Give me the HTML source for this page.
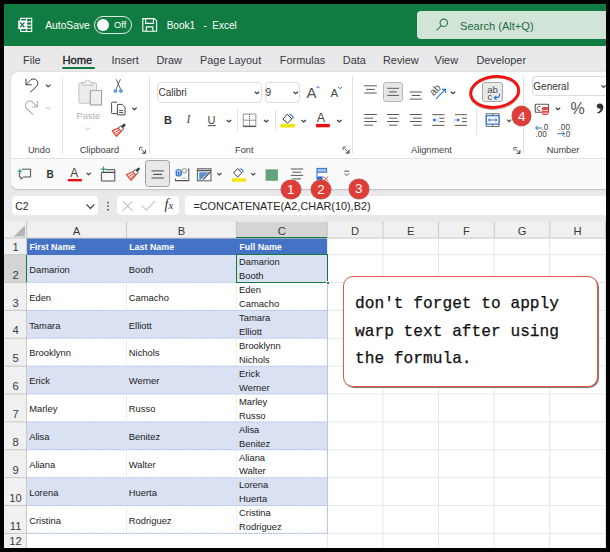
<!DOCTYPE html>
<html><head><meta charset="utf-8">
<style>
*{box-sizing:border-box}
html,body{margin:0;padding:0}
body{width:610px;height:552px;position:relative;overflow:hidden;background:#e9e9ec;font-family:"Liberation Sans",sans-serif;color:#262626}
.a{position:absolute}
.t{position:absolute;white-space:nowrap;line-height:1}
svg{position:absolute;overflow:visible}
</style></head><body>

<div class="a" style="left:0.00px;top:0.00px;width:610.00px;height:45.60px;background:#117c42"></div>
<svg style="left:0px;top:0px" width="610" height="552" viewBox="0 0 610 552"><g fill="none" stroke="#fff" stroke-width="1.1">
<rect x="20.6" y="18.3" width="11.1" height="13.2" fill="#117c42"/>
<line x1="26.6" y1="18.3" x2="26.6" y2="31.5"/>
<line x1="20.6" y1="21.8" x2="31.7" y2="21.8"/>
<line x1="20.6" y1="25.2" x2="31.7" y2="25.2"/>
<line x1="20.6" y1="28.3" x2="31.7" y2="28.3"/>
</g>
<rect x="18.2" y="20.5" width="8.4" height="8.6" fill="#fff"/>
<path d="M20.2 22.4 L24.4 27.4 M24.4 22.4 L20.2 27.4" stroke="#117c42" stroke-width="1.4"/>
</svg>
<div class="t" style="left:45.20px;top:21.08px;font-size:10.3px;color:#fff;font-family:'Liberation Sans',sans-serif;">AutoSave</div>
<div class="a" style="left:94.4px;top:16.4px;width:37.6px;height:17.4px;border:1px solid rgba(255,255,255,.85);border-radius:9px"></div>
<div class="a" style="left:97.2px;top:18.9px;width:12px;height:12px;border-radius:50%;background:#fff"></div>
<div class="t" style="left:114.10px;top:20.93px;font-size:9.3px;color:#fff;font-family:'Liberation Sans',sans-serif;">Off</div>
<svg style="left:0px;top:0px" width="610" height="552" viewBox="0 0 610 552"><g fill="none" stroke="#fff" stroke-width="1.1">
<path d="M142.8 18.6 H154.3 L156.6 20.9 V31.2 H142.8 Z"/>
<path d="M145.6 18.6 V23.4 H153.4 V18.6"/>
<path d="M146.3 31.2 V26.9 H152.9 V31.2"/>
</g></svg>
<div class="t" style="left:166.70px;top:21.14px;font-size:10.0px;color:#fff;font-family:'Liberation Sans',sans-serif;">Book1 &nbsp;&nbsp;-&nbsp;&nbsp;Excel</div>
<div class="a" style="left:417.20px;top:10.90px;width:220.00px;height:28.00px;background:#d2e3d8;border-radius:4px"></div>
<svg style="left:0px;top:0px" width="610" height="552" viewBox="0 0 610 552"><g fill="none" stroke="#2c7a4a" stroke-width="1.1"><circle cx="443.8" cy="22.8" r="3.7"/><path d="M441.2 25.6 L436.6 30.4"/></g></svg>
<div class="t" style="left:460.00px;top:20.90px;font-size:11.1px;color:#236b40;font-family:'Liberation Sans',sans-serif;">Search (Alt+Q)</div>
<div class="t" style="left:23.10px;top:54.77px;font-size:10.9px;color:#383838;font-family:'Liberation Sans',sans-serif;">File</div>
<div class="t" style="left:62.50px;top:54.52px;font-size:11.2px;color:#242424;font-family:'Liberation Sans',sans-serif;-webkit-text-stroke:0.35px #242424;">Home</div>
<div class="t" style="left:111.50px;top:54.77px;font-size:10.9px;color:#383838;font-family:'Liberation Sans',sans-serif;">Insert</div>
<div class="t" style="left:156.40px;top:54.77px;font-size:10.9px;color:#383838;font-family:'Liberation Sans',sans-serif;">Draw</div>
<div class="t" style="left:200.00px;top:54.77px;font-size:10.9px;color:#383838;font-family:'Liberation Sans',sans-serif;">Page Layout</div>
<div class="t" style="left:279.80px;top:54.77px;font-size:10.9px;color:#383838;font-family:'Liberation Sans',sans-serif;">Formulas</div>
<div class="t" style="left:342.80px;top:54.77px;font-size:10.9px;color:#383838;font-family:'Liberation Sans',sans-serif;">Data</div>
<div class="t" style="left:383.00px;top:54.77px;font-size:10.9px;color:#383838;font-family:'Liberation Sans',sans-serif;">Review</div>
<div class="t" style="left:434.60px;top:54.77px;font-size:10.9px;color:#383838;font-family:'Liberation Sans',sans-serif;">View</div>
<div class="t" style="left:476.40px;top:54.77px;font-size:10.9px;color:#383838;font-family:'Liberation Sans',sans-serif;">Developer</div>
<div class="a" style="left:62.30px;top:67.00px;width:32.60px;height:2.00px;background:#117c42;border-radius:1px"></div>
<div class="a" style="left:11.00px;top:71.50px;width:620.00px;height:117.00px;background:#fff;border-radius:7px;box-shadow:0 0.5px 1.5px rgba(0,0,0,.18)"></div>
<div class="a" style="left:11.00px;top:158.00px;width:620.00px;height:30.50px;background:#fafafa;border-top:1px solid #e1e1e1;border-radius:0 0 8px 8px"></div>
<svg style="left:0px;top:0px" width="610" height="552" viewBox="0 0 610 552"><line x1="62.5" y1="76.5" x2="62.5" y2="153.5" stroke="#e0e0e0" stroke-width="1"/><line x1="149.5" y1="76.5" x2="149.5" y2="153.5" stroke="#e0e0e0" stroke-width="1"/><line x1="352.5" y1="76.5" x2="352.5" y2="153.5" stroke="#e0e0e0" stroke-width="1"/><line x1="523.5" y1="76.5" x2="523.5" y2="153.5" stroke="#e0e0e0" stroke-width="1"/></svg>
<svg style="left:0px;top:0px" width="610" height="552" viewBox="0 0 610 552"><g fill="none" stroke="#3c3c3c" stroke-width="1.0" stroke-linecap="round" stroke-linejoin="round">
<path d="M25.9 79.2 V84.8 H31.4"/>
<path d="M26.4 84.3 L30.5 80.2 A4.3 4.3 0 0 1 36.6 86.3 L30.4 92.1"/>
</g><path d="M45.90 84.60 L48.20 86.60 L50.50 84.60" fill="none" stroke="#3c3c3c" stroke-width="1.2"/>
<g fill="none" stroke="#a7b3ad" stroke-width="1.1" stroke-linecap="round" stroke-linejoin="round">
<path d="M37.4 101.3 V107 H32.2"/>
<path d="M36.9 106.5 L32.8 102.4 A4.3 4.3 0 0 0 26.7 108.5 L32.9 114.7"/>
</g><path d="M46.00 107.40 L48.20 109.20 L50.40 107.40" fill="none" stroke="#c0c0c0" stroke-width="1.0"/></svg>
<div class="t" style="left:27.90px;top:146.13px;font-size:9.3px;color:#424242;font-family:'Liberation Sans',sans-serif;">Undo</div>
<svg style="left:0px;top:0px" width="610" height="552" viewBox="0 0 610 552"><g>
<rect x="78.9" y="83.0" width="17.6" height="20.2" rx="1" fill="#ededed" stroke="#c4c4c4" stroke-width="1"/>
<path d="M82.4 85.0 V82.4 H85.4 A2.3 2.3 0 0 1 90.0 82.4 H93.0 V85.0 Z" fill="#f6f6f6" stroke="#bdbdbd" stroke-width="1"/>
<rect x="90.2" y="90.4" width="11.4" height="14.6" fill="#efefef" stroke="#8e8e8e" stroke-width="0.9"/>
<line x1="90.2" y1="90.6" x2="101.6" y2="90.6" stroke="#9fc2ae" stroke-width="0.9"/>
</g><path d="M85.50 127.70 L87.70 129.70 L89.90 127.70" fill="none" stroke="#bdbdbd" stroke-width="1.0"/>
<g fill="none" stroke="#505050" stroke-width="0.9">
<path d="M116.2 79.3 L120.6 89.4 M120.4 79.3 L116.0 89.4"/>
</g>
<circle cx="115.5" cy="90.9" r="1.5" fill="#7ba7e0" stroke="#3f7fd6" stroke-width="0.8"/>
<circle cx="120.9" cy="90.9" r="1.5" fill="#7ba7e0" stroke="#3f7fd6" stroke-width="0.8"/>
<g fill="none" stroke="#4a4a4a" stroke-width="1">
<path d="M117 102.2 H112.4 Q111.6 102.2 111.6 103 V112.8 Q111.6 113.6 112.4 113.6 H116.8"/>
<path d="M117.4 104.4 H122.2 L125 107.2 V114.9 H117.4 Z" fill="#fff"/>
<path d="M119.2 110.6 H123.2 M119.2 112.6 H123.2"/>
</g><path d="M132.30 107.80 L134.50 109.80 L136.70 107.80" fill="none" stroke="#3c3c3c" stroke-width="1.2"/>
<g transform="translate(-14.4 -43.8)">
<path d="M138.6 168.8 L136.0 171.4" stroke="#3c3c3c" stroke-width="2.6" stroke-linecap="round"/>
<path d="M132.6 172.0 L135.2 169.6 L138.0 172.6 L135.6 175.2 Z" fill="#fff" stroke="#3c3c3c" stroke-width="1.0"/>
<path d="M132.6 172.0 L126.6 174.6 L131.0 180.2 L135.6 175.2 Z" fill="#fff" stroke="#e8483a" stroke-width="1.3" stroke-linejoin="round"/>
<path d="M128.4 176.6 L133.4 174.0 M129.8 178.6 L134.2 175.4" stroke="#e8483a" stroke-width="1.0"/>
</g>
<g fill="none" stroke="#555" stroke-width="0.9"><path d="M139.5 150.3 V147.3 H142.5"/><path d="M145.5 149.8 V153.3 H142.0"/><path d="M141.0 148.8 L145.3 153.10000000000002"/><path d="M142.6 153.10000000000002 H145.3 V150.4"/></g></svg>
<div class="t" style="left:76.60px;top:111.51px;font-size:9.2px;color:#b0b0b0;font-family:'Liberation Sans',sans-serif;">Paste</div>
<div class="t" style="left:79.70px;top:146.21px;font-size:9.2px;color:#424242;font-family:'Liberation Sans',sans-serif;">Clipboard</div>
<div class="a" style="left:156.70px;top:82.30px;width:104.90px;height:20.50px;background:#fff;border:1px solid #dcdcdc;border-radius:4px"></div>
<div class="a" style="left:264.60px;top:82.30px;width:35.60px;height:20.50px;background:#fff;border:1px solid #dcdcdc;border-radius:4px"></div>
<div class="t" style="left:158.50px;top:88.44px;font-size:10.0px;color:#333;font-family:'Liberation Sans',sans-serif;">Calibri</div>
<div class="t" style="left:265.50px;top:88.44px;font-size:10.0px;color:#333;font-family:'Liberation Sans',sans-serif;">9</div>
<div class="t" style="left:306.60px;top:84.90px;font-size:15.0px;color:#505050;font-family:'Liberation Sans',sans-serif;">A</div>
<div class="t" style="left:330.50px;top:87.67px;font-size:11.5px;color:#444;font-family:'Liberation Sans',sans-serif;">A</div>
<div class="t" style="left:163.90px;top:114.69px;font-size:11.0px;color:#333;font-family:'Liberation Sans',sans-serif;font-weight:bold;">B</div>
<div class="t" style="left:186.40px;top:114.27px;font-size:11.5px;color:#444;font-family:'Liberation Sans',sans-serif;font-style:italic;font-family:'Liberation Serif',serif;">I</div>
<div class="t" style="left:207.50px;top:114.69px;font-size:11.0px;color:#444;font-family:'Liberation Sans',sans-serif;">U</div>
<div class="t" style="left:316.80px;top:112.42px;font-size:12.5px;color:#444;font-family:'Liberation Sans',sans-serif;">A</div>
<svg style="left:0px;top:0px" width="610" height="552" viewBox="0 0 610 552"><path d="M254.80 91.70 L257.00 93.70 L259.20 91.70" fill="none" stroke="#3c3c3c" stroke-width="1.2"/><path d="M293.60 91.70 L295.80 93.70 L298.00 91.70" fill="none" stroke="#3c3c3c" stroke-width="1.2"/>
<path d="M316.4 88.2 L318 86.5 L319.6 88.2" fill="none" stroke="#2f6fd0" stroke-width="1"/>
<path d="M338.2 86.9 L340.2 88.6 L342.2 86.9" fill="none" stroke="#2f6fd0" stroke-width="1"/>
<line x1="207.8" y1="125.6" x2="215.8" y2="125.6" stroke="#444" stroke-width="1"/>
<path d="M226.80 120.00 L229.00 122.00 L231.20 120.00" fill="none" stroke="#3c3c3c" stroke-width="1.2"/>
<line x1="237.6" y1="110" x2="237.6" y2="130.6" stroke="#e0e0e0" stroke-width="1"/>
<g fill="none" stroke="#555" stroke-width="1">
<rect x="243.3" y="114" width="12.6" height="12.4" stroke-dasharray="1.2 0.8"/>
<path d="M249.6 114 V126.4 M243.3 120.2 H255.9" stroke-dasharray="1.2 0.8"/>
<path d="M243.3 126.4 H255.9" stroke-width="1.4" stroke-dasharray="none"/>
</g><path d="M264.00 120.00 L266.20 122.00 L268.40 120.00" fill="none" stroke="#3c3c3c" stroke-width="1.2"/>
<line x1="275.5" y1="110" x2="275.5" y2="130.6" stroke="#e0e0e0" stroke-width="1"/>
<g>
<path d="M283 119.2 L287.2 114.2 L291.8 118.8 L287.6 123.2 Z" fill="#fff" stroke="#3c3c3c" stroke-width="1"/>
<path d="M289.2 114.6 Q292.6 114.2 293.2 118.6" fill="none" stroke="#2f6fd0" stroke-width="1.1"/>
<rect x="280.6" y="123.9" width="14.3" height="3.6" fill="#f5e400"/>
</g><path d="M301.50 120.00 L303.70 122.00 L305.90 120.00" fill="none" stroke="#3c3c3c" stroke-width="1.2"/>
<rect x="316" y="123.9" width="13.8" height="3.4" fill="#e81010"/>
<path d="M337.10 120.00 L339.30 122.00 L341.50 120.00" fill="none" stroke="#3c3c3c" stroke-width="1.2"/>
<g fill="none" stroke="#555" stroke-width="0.9"><path d="M343.1 150.1 V147.1 H346.1"/><path d="M349.1 149.6 V153.1 H345.6"/><path d="M344.6 148.6 L348.90000000000003 152.9"/><path d="M346.20000000000005 152.9 H348.90000000000003 V150.2"/></g></svg>
<div class="t" style="left:235.10px;top:146.21px;font-size:9.2px;color:#424242;font-family:'Liberation Sans',sans-serif;">Font</div>
<div class="a" style="left:382.60px;top:82.10px;width:20.50px;height:20.40px;background:#e6e6e6;border:1px solid #b8b8b8;border-radius:3px"></div>
<div class="a" style="left:482.30px;top:82.30px;width:21.20px;height:20.20px;background:#e9e9e9;border:1px solid #a8a8a8;border-radius:3px"></div>
<svg style="left:0px;top:0px" width="610" height="552" viewBox="0 0 610 552"><line x1="364.2" y1="85.8" x2="376.9" y2="85.8" stroke="#5a5a5a" stroke-width="1.0"/><line x1="364.2" y1="93.0" x2="376.9" y2="93.0" stroke="#5a5a5a" stroke-width="1.0"/><line x1="366.0" y1="89.4" x2="374.7" y2="89.4" stroke="#5a5a5a" stroke-width="1.0"/>
<line x1="387.2" y1="88.3" x2="399" y2="88.3" stroke="#5a5a5a" stroke-width="1.0"/><line x1="387.2" y1="95.4" x2="399" y2="95.4" stroke="#5a5a5a" stroke-width="1.0"/><line x1="389.2" y1="91.9" x2="396.8" y2="91.9" stroke="#5a5a5a" stroke-width="1.0"/>
<line x1="409.7" y1="92.0" x2="422" y2="92.0" stroke="#5a5a5a" stroke-width="1.0"/><line x1="409.7" y1="99.1" x2="422" y2="99.1" stroke="#5a5a5a" stroke-width="1.0"/><line x1="411.8" y1="95.5" x2="420.2" y2="95.5" stroke="#5a5a5a" stroke-width="1.0"/>
<line x1="364.3" y1="114.5" x2="376.8" y2="114.5" stroke="#5a5a5a" stroke-width="1.0"/><line x1="364.3" y1="121.5" x2="376.8" y2="121.5" stroke="#5a5a5a" stroke-width="1.0"/><line x1="364.3" y1="118.2" x2="373" y2="118.2" stroke="#5a5a5a" stroke-width="1.0"/><line x1="364.3" y1="125.2" x2="373" y2="125.2" stroke="#5a5a5a" stroke-width="1.0"/>
<line x1="387" y1="114.5" x2="399" y2="114.5" stroke="#5a5a5a" stroke-width="1.0"/><line x1="387" y1="121.5" x2="399" y2="121.5" stroke="#5a5a5a" stroke-width="1.0"/><line x1="389" y1="118.2" x2="397.3" y2="118.2" stroke="#5a5a5a" stroke-width="1.0"/><line x1="389" y1="125.2" x2="397.3" y2="125.2" stroke="#5a5a5a" stroke-width="1.0"/>
<line x1="409.8" y1="114.5" x2="421.7" y2="114.5" stroke="#5a5a5a" stroke-width="1.0"/><line x1="409.8" y1="121.5" x2="421.7" y2="121.5" stroke="#5a5a5a" stroke-width="1.0"/><line x1="413" y1="118.2" x2="421.7" y2="118.2" stroke="#5a5a5a" stroke-width="1.0"/><line x1="413" y1="125.2" x2="421.7" y2="125.2" stroke="#5a5a5a" stroke-width="1.0"/>
<line x1="432.1" y1="114.7" x2="444.4" y2="114.7" stroke="#5a5a5a" stroke-width="1.0"/><line x1="432.1" y1="125.4" x2="444.4" y2="125.4" stroke="#5a5a5a" stroke-width="1.0"/><line x1="439.2" y1="118.2" x2="444.4" y2="118.2" stroke="#5a5a5a" stroke-width="1.0"/><line x1="439.2" y1="121.6" x2="444.4" y2="121.6" stroke="#5a5a5a" stroke-width="1.0"/>
<path d="M432.3 120 L435.2 118 V122 Z" fill="#2f6fd0"/><line x1="435" y1="120" x2="438" y2="120" stroke="#2f6fd0" stroke-width="1.1" stroke-dasharray="1 0.6"/>
<line x1="455" y1="114.7" x2="467" y2="114.7" stroke="#5a5a5a" stroke-width="1.0"/><line x1="455" y1="125.4" x2="467" y2="125.4" stroke="#5a5a5a" stroke-width="1.0"/><line x1="461.8" y1="118.2" x2="467" y2="118.2" stroke="#5a5a5a" stroke-width="1.0"/><line x1="461.8" y1="121.6" x2="467" y2="121.6" stroke="#5a5a5a" stroke-width="1.0"/>
<path d="M460.2 120 L457.3 118 V122 Z" fill="#2f6fd0"/><line x1="454.3" y1="120" x2="457.5" y2="120" stroke="#2f6fd0" stroke-width="1.1" stroke-dasharray="1 0.6"/>
<text x="0" y="0" font-family="Liberation Sans" font-size="10.2" fill="#4a4a4a" transform="translate(433.6 96.2) rotate(-45)">ab</text>
<path d="M436 98.8 L445.6 89.2 M441.9 89.4 H445.6 V93.1" fill="none" stroke="#2f6fd0" stroke-width="1.1"/>
<path d="M450.80 91.70 L453.00 93.70 L455.20 91.70" fill="none" stroke="#3c3c3c" stroke-width="1.2"/>
<text x="487.2" y="93.2" font-family="Liberation Sans" font-size="9.6" fill="#4a4a4a">ab</text>
<text x="487.4" y="99.6" font-family="Liberation Sans" font-size="9.6" fill="#4a4a4a">c</text>
<path d="M499.6 93.6 Q500.4 97.8 494.6 97.8 M496.4 95.8 L494.3 97.8 L496.4 99.8" fill="none" stroke="#2f6fd0" stroke-width="1.1"/>
<g>
<rect x="486.3" y="113.8" width="12.7" height="12.6" fill="none" stroke="#6a6a6a" stroke-width="1"/>
<line x1="492.65" y1="113.8" x2="492.65" y2="126.4" stroke="#6a6a6a" stroke-width="1"/>
<rect x="486.3" y="115.8" width="12.7" height="8.3" fill="#fff" stroke="#2f6fd0" stroke-width="1.2"/>
<path d="M488.4 120 H496.9 M490 118.4 L488.4 120 L490 121.6 M495.3 118.4 L496.9 120 L495.3 121.6" fill="none" stroke="#2f6fd0" stroke-width="1"/>
</g><path d="M507.10 119.60 L509.10 121.60 L511.10 119.60" fill="none" stroke="#3c3c3c" stroke-width="1.1"/>
<line x1="476.7" y1="108" x2="476.7" y2="134.7" stroke="#e0e0e0" stroke-width="1"/>
<g fill="none" stroke="#555" stroke-width="0.9"><path d="M513.9 150.5 V147.5 H516.9"/><path d="M519.9 150.0 V153.5 H516.4"/><path d="M515.4 149.0 L519.6999999999999 153.3"/><path d="M517.0 153.3 H519.6999999999999 V150.6"/></g></svg>
<div class="t" style="left:411.00px;top:146.21px;font-size:9.2px;color:#424242;font-family:'Liberation Sans',sans-serif;">Alignment</div>
<div class="a" style="left:531.70px;top:75.60px;width:100.00px;height:20.00px;background:#fff;border:1px solid #dcdcdc;border-radius:4px"></div>
<div class="t" style="left:533.30px;top:81.73px;font-size:10.0px;color:#333;font-family:'Liberation Sans',sans-serif;">General</div>
<div class="t" style="left:570.40px;top:101.06px;font-size:16.0px;color:#505050;font-family:'Liberation Sans',sans-serif;">%</div>
<svg style="left:0px;top:0px" width="610" height="552" viewBox="0 0 610 552"><path d="M599.6 103.4 C602.4 103.4 603.4 105.2 603.4 107.2 C603.4 110.2 601.2 112.6 597.6 113.6 L597.2 112.6 C599.4 111.6 600.4 110.4 600.6 108.8 C598.4 109 596.8 107.8 596.8 106 C596.8 104.4 598 103.4 599.6 103.4 Z" fill="#333"/></svg>
<svg style="left:0px;top:0px" width="610" height="552" viewBox="0 0 610 552"><rect x="535.2" y="104.3" width="13.3" height="8.0" rx="0.6" fill="#fff" stroke="#555" stroke-width="1.1"/>
<path d="M540.2 106.6 A2.1 2.1 0 1 0 540.2 110.4" fill="none" stroke="#444" stroke-width="1"/>
<rect x="541.8" y="107.0" width="6.8" height="8.1" rx="1.8" fill="#e84545"/>
<path d="M542.4 110.5 H548 M542.4 113.2 H548" stroke="#fff" stroke-width="0.8"/>
<path d="M555.80 107.80 L558.00 109.80 L560.20 107.80" fill="none" stroke="#3c3c3c" stroke-width="1.2"/><path d="M601.40 85.40 L603.60 87.40 L605.80 85.40" fill="none" stroke="#3c3c3c" stroke-width="1.2"/>
<path d="M541.8 128 H535.6 M537.8 126 L535.6 128 L537.8 130" fill="none" stroke="#2f6fd0" stroke-width="1"/>
<path d="M557.4 133.7 H564.6 M562.4 131.7 L564.6 133.7 L562.4 135.7" fill="none" stroke="#2f6fd0" stroke-width="1"/>
</svg>
<div class="t" style="left:541.60px;top:124.26px;font-size:8.2px;color:#444;font-family:'Liberation Sans',sans-serif;">.0</div>
<div class="t" style="left:535.40px;top:131.26px;font-size:8.2px;color:#444;font-family:'Liberation Sans',sans-serif;">.00</div>
<div class="t" style="left:558.60px;top:124.26px;font-size:8.2px;color:#444;font-family:'Liberation Sans',sans-serif;">.00</div>
<div class="t" style="left:563.40px;top:131.26px;font-size:8.2px;color:#444;font-family:'Liberation Sans',sans-serif;">.0</div>
<div class="t" style="left:546.70px;top:146.21px;font-size:9.2px;color:#424242;font-family:'Liberation Sans',sans-serif;">Number</div>
<div class="a" style="left:145.20px;top:160.10px;width:24.60px;height:26.80px;background:#e8e8e8;border:1px solid #a0a0a0;border-radius:3.5px"></div>
<div class="t" style="left:46.60px;top:169.84px;font-size:10.0px;color:#333;font-family:'Liberation Sans',sans-serif;font-weight:bold;">B</div>
<div class="t" style="left:70.20px;top:167.04px;font-size:12.0px;color:#444;font-family:'Liberation Sans',sans-serif;">A</div>
<svg style="left:0px;top:0px" width="610" height="552" viewBox="0 0 610 552"><g fill="none" stroke="#4a4a4a" stroke-width="1">
<path d="M22 169.2 H30.6 V177 H23.2 L21 179.4 V177 H19.4 V172.2"/>
</g>
<path d="M19.9 168.8 V173.4 M17.6 171.1 H22.2" stroke="#3aa36a" stroke-width="1.2"/>
<rect x="67.8" y="179" width="14.1" height="2.4" fill="#e81010"/>
<path d="M86.60 172.85 L88.70 174.75 L90.80 172.85" fill="none" stroke="#3c3c3c" stroke-width="1.1"/>
<g fill="none" stroke="#4a4a4a" stroke-width="1">
<path d="M105.6 169.7 H114.8 V181 H101.4 V173"/>
<line x1="101.4" y1="172.4" x2="114.8" y2="172.4" stroke-width="1.3"/>
</g>
<path d="M103.4 166.6 V171.8 M100.8 169.2 H106" stroke="#3aa36a" stroke-width="1.2"/>
<g transform="translate(0 0)">
<path d="M138.6 168.8 L136.0 171.4" stroke="#3c3c3c" stroke-width="2.6" stroke-linecap="round"/>
<path d="M132.6 172.0 L135.2 169.6 L138.0 172.6 L135.6 175.2 Z" fill="#fff" stroke="#3c3c3c" stroke-width="1.0"/>
<path d="M132.6 172.0 L126.6 174.6 L131.0 180.2 L135.6 175.2 Z" fill="#fff" stroke="#e8483a" stroke-width="1.3" stroke-linejoin="round"/>
<path d="M128.4 176.6 L133.4 174.0 M129.8 178.6 L134.2 175.4" stroke="#e8483a" stroke-width="1.0"/>
</g>
<line x1="151.5" y1="170.9" x2="163.9" y2="170.9" stroke="#555" stroke-width="1.1"/><line x1="151.5" y1="178.0" x2="163.9" y2="178.0" stroke="#555" stroke-width="1.1"/><line x1="153.3" y1="174.4" x2="162.1" y2="174.4" stroke="#444" stroke-width="1.1"/>
<g>
<path d="M188.8 168.2 V180.6 H175.5 V178.6" fill="none" stroke="#555" stroke-width="1.1"/>
<rect x="175.6" y="169.2" width="6.2" height="7.4" rx="2" fill="#2f6fd0"/>
<path d="M177.6 171 V175.6 M179.8 171 V175.6 M176.4 170.8 H181" stroke="#fff" stroke-width="0.7"/>
<circle cx="184.4" cy="170.8" r="2.3" fill="#eee" stroke="#888" stroke-width="0.9"/>
<path d="M180.8 178 H186.6" stroke="#9fc2ae" stroke-width="0.8"/>
</g>
<g>
<rect x="197.4" y="168.8" width="13.6" height="12" fill="#fff" stroke="#555" stroke-width="1"/>
<line x1="197.4" y1="170.6" x2="211" y2="170.6" stroke="#555" stroke-width="1.4"/>
<path d="M199.2 172.2 H209 L200.4 180 H199.2 Z" fill="#5b8fd8"/>
<path d="M203 179.6 L210.4 172" stroke="#555" stroke-width="1.3"/>
</g><path d="M217.30 173.05 L219.40 174.95 L221.50 173.05" fill="none" stroke="#3c3c3c" stroke-width="1.1"/>
<g>
<path d="M233.6 173 L237.6 168.6 L241.8 172.8 L237.8 177 Z" fill="#fff" stroke="#3c3c3c" stroke-width="1"/>
<path d="M239.6 169 Q242.8 168.6 243.4 172.4" fill="none" stroke="#2f6fd0" stroke-width="1.1"/>
<rect x="231.9" y="178.4" width="14" height="3.2" fill="#f5e400"/>
</g><path d="M251.10 173.05 L253.20 174.95 L255.30 173.05" fill="none" stroke="#3c3c3c" stroke-width="1.1"/>
<rect x="265.6" y="169.3" width="12.3" height="11.5" fill="#62a57a"/>
<line x1="290.8" y1="169.0" x2="303.2" y2="169.0" stroke="#555" stroke-width="1.0"/><line x1="290.8" y1="175.4" x2="303.2" y2="175.4" stroke="#555" stroke-width="1.0"/><line x1="292.4" y1="172.2" x2="301.0" y2="172.2" stroke="#555" stroke-width="1.0"/><line x1="292.4" y1="178.9" x2="301.0" y2="178.9" stroke="#555" stroke-width="1.0"/>
<g>
<rect x="317" y="168.4" width="9.6" height="3.8" fill="#a9c4ec" stroke="#2f6fd0" stroke-width="1"/>
<line x1="317" y1="172.2" x2="317" y2="176.6" stroke="#2f6fd0" stroke-width="1"/>
<rect x="316.5" y="176.4" width="6.2" height="3.4" fill="#2f6fd0"/>
<path d="M323.2 176.4 L328.4 181 M328.4 176.4 L323.2 181" stroke="#e84a3a" stroke-width="0.9"/>
</g>
<path d="M344.4 171.2 H349.2 M344.6 173.4 L346.8 175.6 L349 173.4" fill="none" stroke="#555" stroke-width="1"/>
</svg>
<div class="a" style="left:11.90px;top:196.20px;width:86.20px;height:18.90px;background:#fff;border-radius:4px"></div>
<div class="a" style="left:117.30px;top:196.20px;width:61.90px;height:18.90px;background:#fff;border-radius:4px"></div>
<div class="a" style="left:185.00px;top:196.20px;width:430.00px;height:18.90px;background:#fff;border-radius:4px"></div>
<div class="t" style="left:15.20px;top:201.70px;font-size:10.4px;color:#262626;font-family:'Liberation Sans',sans-serif;">C2</div>
<svg style="left:0px;top:0px" width="610" height="552" viewBox="0 0 610 552"><path d="M86.40 204.30 L90.40 208.50 L94.40 204.30" fill="none" stroke="#3c3c3c" stroke-width="1.2"/>
<circle cx="108" cy="202.6" r="0.9" fill="#444"/><circle cx="108" cy="206.1" r="0.9" fill="#444"/><circle cx="108" cy="209.7" r="0.9" fill="#444"/>
<path d="M122.6 201.2 L132.6 210.8 M132.6 201.2 L122.6 210.8" stroke="#c2c2c2" stroke-width="1.1"/>
<path d="M141.8 205.8 L146.4 210.2 L154.8 201.2" fill="none" stroke="#c2c2c2" stroke-width="1.1"/>
</svg>
<div class="t" style="left:164.60px;top:197.95px;font-size:14.0px;color:#333;font-family:'Liberation Sans',sans-serif;font-family:'Liberation Serif',serif;font-style:italic;">f<span style="font-size:11px">x</span></div>
<div class="t" style="left:193.40px;top:200.87px;font-size:10.9px;color:#262626;font-family:'Liberation Sans',sans-serif;">=CONCATENATE(A2,CHAR(10),B2)</div>
<div class="a" style="left:0.00px;top:221.50px;width:610.00px;height:340.00px;background:#fff"></div>
<div class="a" style="left:0.00px;top:221.50px;width:610.00px;height:16.60px;background:#f0f0f0"></div>
<div class="a" style="left:0.00px;top:221.50px;width:26.60px;height:340.00px;background:#f0f0f0"></div>
<div class="a" style="left:236.30px;top:221.50px;width:91.10px;height:16.60px;background:#d4d4d4"></div>
<div class="a" style="left:0.00px;top:254.60px;width:26.60px;height:27.88px;background:#d4d4d4"></div>
<svg style="left:0px;top:0px" width="610" height="552" viewBox="0 0 610 552"><line x1="327.4" y1="238.1" x2="327.4" y2="560" stroke="#e6e6e6" stroke-width="1"/><line x1="382.9" y1="238.1" x2="382.9" y2="560" stroke="#e6e6e6" stroke-width="1"/><line x1="438.5" y1="238.1" x2="438.5" y2="560" stroke="#e6e6e6" stroke-width="1"/><line x1="494.2" y1="238.1" x2="494.2" y2="560" stroke="#e6e6e6" stroke-width="1"/><line x1="549.8" y1="238.1" x2="549.8" y2="560" stroke="#e6e6e6" stroke-width="1"/><line x1="605.5" y1="238.1" x2="605.5" y2="560" stroke="#e6e6e6" stroke-width="1"/><line x1="327.4" y1="254.6" x2="610" y2="254.6" stroke="#e6e6e6" stroke-width="1"/><line x1="327.4" y1="282.48" x2="610" y2="282.48" stroke="#e6e6e6" stroke-width="1"/><line x1="327.4" y1="310.36" x2="610" y2="310.36" stroke="#e6e6e6" stroke-width="1"/><line x1="327.4" y1="338.24" x2="610" y2="338.24" stroke="#e6e6e6" stroke-width="1"/><line x1="327.4" y1="366.12" x2="610" y2="366.12" stroke="#e6e6e6" stroke-width="1"/><line x1="327.4" y1="394.0" x2="610" y2="394.0" stroke="#e6e6e6" stroke-width="1"/><line x1="327.4" y1="421.88" x2="610" y2="421.88" stroke="#e6e6e6" stroke-width="1"/><line x1="327.4" y1="449.76" x2="610" y2="449.76" stroke="#e6e6e6" stroke-width="1"/><line x1="327.4" y1="477.64" x2="610" y2="477.64" stroke="#e6e6e6" stroke-width="1"/><line x1="327.4" y1="505.52" x2="610" y2="505.52" stroke="#e6e6e6" stroke-width="1"/><line x1="327.4" y1="533.4" x2="610" y2="533.4" stroke="#e6e6e6" stroke-width="1"/></svg>
<div class="a" style="left:26.60px;top:238.10px;width:300.80px;height:16.50px;background:#4472c4"></div>
<div class="a" style="left:26.60px;top:254.60px;width:300.80px;height:27.88px;background:#d9e1f2"></div>
<div class="a" style="left:26.60px;top:282.48px;width:300.80px;height:27.88px;background:#fff"></div>
<div class="a" style="left:26.60px;top:310.36px;width:300.80px;height:27.88px;background:#d9e1f2"></div>
<div class="a" style="left:26.60px;top:338.24px;width:300.80px;height:27.88px;background:#fff"></div>
<div class="a" style="left:26.60px;top:366.12px;width:300.80px;height:27.88px;background:#d9e1f2"></div>
<div class="a" style="left:26.60px;top:394.00px;width:300.80px;height:27.88px;background:#fff"></div>
<div class="a" style="left:26.60px;top:421.88px;width:300.80px;height:27.88px;background:#d9e1f2"></div>
<div class="a" style="left:26.60px;top:449.76px;width:300.80px;height:27.88px;background:#fff"></div>
<div class="a" style="left:26.60px;top:477.64px;width:300.80px;height:27.88px;background:#d9e1f2"></div>
<div class="a" style="left:26.60px;top:505.52px;width:300.80px;height:27.88px;background:#fff"></div>
<svg style="left:0px;top:0px" width="610" height="552" viewBox="0 0 610 552"><line x1="126.5" y1="282.48" x2="126.5" y2="310.36" stroke="#dfe3ea" stroke-width="1" stroke-dasharray="1.5 1"/><line x1="126.5" y1="338.24" x2="126.5" y2="366.12" stroke="#dfe3ea" stroke-width="1" stroke-dasharray="1.5 1"/><line x1="126.5" y1="394.0" x2="126.5" y2="421.88" stroke="#dfe3ea" stroke-width="1" stroke-dasharray="1.5 1"/><line x1="126.5" y1="449.76" x2="126.5" y2="477.64" stroke="#dfe3ea" stroke-width="1" stroke-dasharray="1.5 1"/><line x1="126.5" y1="505.52" x2="126.5" y2="533.4" stroke="#dfe3ea" stroke-width="1" stroke-dasharray="1.5 1"/><line x1="236.3" y1="282.48" x2="236.3" y2="310.36" stroke="#dfe3ea" stroke-width="1" stroke-dasharray="1.5 1"/><line x1="236.3" y1="338.24" x2="236.3" y2="366.12" stroke="#dfe3ea" stroke-width="1" stroke-dasharray="1.5 1"/><line x1="236.3" y1="394.0" x2="236.3" y2="421.88" stroke="#dfe3ea" stroke-width="1" stroke-dasharray="1.5 1"/><line x1="236.3" y1="449.76" x2="236.3" y2="477.64" stroke="#dfe3ea" stroke-width="1" stroke-dasharray="1.5 1"/><line x1="236.3" y1="505.52" x2="236.3" y2="533.4" stroke="#dfe3ea" stroke-width="1" stroke-dasharray="1.5 1"/><line x1="26.6" y1="282.48" x2="327.4" y2="282.48" stroke="#b4c6e7" stroke-width="1" stroke-dasharray="2 0.8"/><line x1="26.6" y1="310.36" x2="327.4" y2="310.36" stroke="#b4c6e7" stroke-width="1" stroke-dasharray="2 0.8"/><line x1="26.6" y1="338.24" x2="327.4" y2="338.24" stroke="#b4c6e7" stroke-width="1" stroke-dasharray="2 0.8"/><line x1="26.6" y1="366.12" x2="327.4" y2="366.12" stroke="#b4c6e7" stroke-width="1" stroke-dasharray="2 0.8"/><line x1="26.6" y1="394.0" x2="327.4" y2="394.0" stroke="#b4c6e7" stroke-width="1" stroke-dasharray="2 0.8"/><line x1="26.6" y1="421.88" x2="327.4" y2="421.88" stroke="#b4c6e7" stroke-width="1" stroke-dasharray="2 0.8"/><line x1="26.6" y1="449.76" x2="327.4" y2="449.76" stroke="#b4c6e7" stroke-width="1" stroke-dasharray="2 0.8"/><line x1="26.6" y1="477.64" x2="327.4" y2="477.64" stroke="#b4c6e7" stroke-width="1" stroke-dasharray="2 0.8"/><line x1="26.6" y1="505.52" x2="327.4" y2="505.52" stroke="#b4c6e7" stroke-width="1" stroke-dasharray="2 0.8"/><line x1="26.6" y1="533.4" x2="327.4" y2="533.4" stroke="#b4c6e7" stroke-width="1" stroke-dasharray="2 0.8"/><line x1="26.6" y1="533.4" x2="327.4" y2="533.4" stroke="#b4c6e7" stroke-width="1" stroke-dasharray="2 0.8"/><line x1="327.4" y1="254.6" x2="327.4" y2="533.4" stroke="#b4c6e7" stroke-width="1"/><line x1="26.6" y1="221.5" x2="26.6" y2="238.1" stroke="#c8c8c8" stroke-width="1"/><line x1="126.5" y1="221.5" x2="126.5" y2="238.1" stroke="#c8c8c8" stroke-width="1"/><line x1="236.3" y1="221.5" x2="236.3" y2="238.1" stroke="#c8c8c8" stroke-width="1"/><line x1="327.4" y1="221.5" x2="327.4" y2="238.1" stroke="#c8c8c8" stroke-width="1"/><line x1="382.9" y1="221.5" x2="382.9" y2="238.1" stroke="#c8c8c8" stroke-width="1"/><line x1="438.5" y1="221.5" x2="438.5" y2="238.1" stroke="#c8c8c8" stroke-width="1"/><line x1="494.2" y1="221.5" x2="494.2" y2="238.1" stroke="#c8c8c8" stroke-width="1"/><line x1="549.8" y1="221.5" x2="549.8" y2="238.1" stroke="#c8c8c8" stroke-width="1"/><line x1="605.5" y1="221.5" x2="605.5" y2="238.1" stroke="#c8c8c8" stroke-width="1"/><line x1="0" y1="238.1" x2="610" y2="238.1" stroke="#c8c8c8" stroke-width="1"/><line x1="26.6" y1="221.5" x2="26.6" y2="560" stroke="#c8c8c8" stroke-width="1"/><line x1="0" y1="254.6" x2="26.6" y2="254.6" stroke="#c8c8c8" stroke-width="1"/><line x1="0" y1="282.48" x2="26.6" y2="282.48" stroke="#c8c8c8" stroke-width="1"/><line x1="0" y1="310.36" x2="26.6" y2="310.36" stroke="#c8c8c8" stroke-width="1"/><line x1="0" y1="338.24" x2="26.6" y2="338.24" stroke="#c8c8c8" stroke-width="1"/><line x1="0" y1="366.12" x2="26.6" y2="366.12" stroke="#c8c8c8" stroke-width="1"/><line x1="0" y1="394.0" x2="26.6" y2="394.0" stroke="#c8c8c8" stroke-width="1"/><line x1="0" y1="421.88" x2="26.6" y2="421.88" stroke="#c8c8c8" stroke-width="1"/><line x1="0" y1="449.76" x2="26.6" y2="449.76" stroke="#c8c8c8" stroke-width="1"/><line x1="0" y1="477.64" x2="26.6" y2="477.64" stroke="#c8c8c8" stroke-width="1"/><line x1="0" y1="505.52" x2="26.6" y2="505.52" stroke="#c8c8c8" stroke-width="1"/><line x1="0" y1="533.4" x2="26.6" y2="533.4" stroke="#c8c8c8" stroke-width="1"/><path d="M13.6 236.6 H25.0 V225.2 Z" fill="#b4b4b4"/></svg>
<div class="t" style="left:56.55px;width:40px;text-align:center;top:225.72px;font-size:11.2px;color:#3a3a3a">A</div>
<div class="t" style="left:161.40px;width:40px;text-align:center;top:225.72px;font-size:11.2px;color:#3a3a3a">B</div>
<div class="t" style="left:261.85px;width:40px;text-align:center;top:225.72px;font-size:11.2px;color:#3a3a3a">C</div>
<div class="t" style="left:335.15px;width:40px;text-align:center;top:225.72px;font-size:11.2px;color:#3a3a3a">D</div>
<div class="t" style="left:390.70px;width:40px;text-align:center;top:225.72px;font-size:11.2px;color:#3a3a3a">E</div>
<div class="t" style="left:446.35px;width:40px;text-align:center;top:225.72px;font-size:11.2px;color:#3a3a3a">F</div>
<div class="t" style="left:502.00px;width:40px;text-align:center;top:225.72px;font-size:11.2px;color:#3a3a3a">G</div>
<div class="t" style="left:557.65px;width:40px;text-align:center;top:225.72px;font-size:11.2px;color:#3a3a3a">H</div>
<div class="t" style="left:0.6px;width:30px;text-align:center;top:241.82px;font-size:11.2px;color:#3a3a3a">1</div>
<div class="t" style="left:0.6px;width:30px;text-align:center;top:269.70px;font-size:11.2px;color:#3a3a3a">2</div>
<div class="t" style="left:0.6px;width:30px;text-align:center;top:297.58px;font-size:11.2px;color:#3a3a3a">3</div>
<div class="t" style="left:0.6px;width:30px;text-align:center;top:325.46px;font-size:11.2px;color:#3a3a3a">4</div>
<div class="t" style="left:0.6px;width:30px;text-align:center;top:353.34px;font-size:11.2px;color:#3a3a3a">5</div>
<div class="t" style="left:0.6px;width:30px;text-align:center;top:381.22px;font-size:11.2px;color:#3a3a3a">6</div>
<div class="t" style="left:0.6px;width:30px;text-align:center;top:409.10px;font-size:11.2px;color:#3a3a3a">7</div>
<div class="t" style="left:0.6px;width:30px;text-align:center;top:436.98px;font-size:11.2px;color:#3a3a3a">8</div>
<div class="t" style="left:0.6px;width:30px;text-align:center;top:464.86px;font-size:11.2px;color:#3a3a3a">9</div>
<div class="t" style="left:0.6px;width:30px;text-align:center;top:492.74px;font-size:11.2px;color:#3a3a3a">10</div>
<div class="t" style="left:0.6px;width:30px;text-align:center;top:520.62px;font-size:11.2px;color:#3a3a3a">11</div>
<div class="t" style="left:0.6px;width:30px;text-align:center;top:536.42px;font-size:11.2px;color:#3a3a3a">12</div>
<div class="t" style="left:29.40px;top:242.87px;font-size:8.9px;color:#fff;font-family:'Liberation Sans',sans-serif;font-weight:bold;">First Name</div>
<div class="t" style="left:129.20px;top:242.87px;font-size:8.9px;color:#fff;font-family:'Liberation Sans',sans-serif;font-weight:bold;">Last Name</div>
<div class="t" style="left:239.40px;top:242.87px;font-size:8.9px;color:#fff;font-family:'Liberation Sans',sans-serif;font-weight:bold;">Full Name</div>
<div class="t" style="left:29.20px;top:264.74px;font-size:9.4px;color:#222;font-family:'Liberation Sans',sans-serif;">Damarion</div>
<div class="t" style="left:128.80px;top:264.74px;font-size:9.4px;color:#222;font-family:'Liberation Sans',sans-serif;">Booth</div>
<div class="t" style="left:239.00px;top:257.34px;font-size:9.4px;color:#222;font-family:'Liberation Sans',sans-serif;">Damarion</div>
<div class="t" style="left:239.00px;top:271.24px;font-size:9.4px;color:#222;font-family:'Liberation Sans',sans-serif;">Booth</div>
<div class="t" style="left:29.20px;top:292.62px;font-size:9.4px;color:#222;font-family:'Liberation Sans',sans-serif;">Eden</div>
<div class="t" style="left:128.80px;top:292.62px;font-size:9.4px;color:#222;font-family:'Liberation Sans',sans-serif;">Camacho</div>
<div class="t" style="left:239.00px;top:285.22px;font-size:9.4px;color:#222;font-family:'Liberation Sans',sans-serif;">Eden</div>
<div class="t" style="left:239.00px;top:299.12px;font-size:9.4px;color:#222;font-family:'Liberation Sans',sans-serif;">Camacho</div>
<div class="t" style="left:29.20px;top:320.50px;font-size:9.4px;color:#222;font-family:'Liberation Sans',sans-serif;">Tamara</div>
<div class="t" style="left:128.80px;top:320.50px;font-size:9.4px;color:#222;font-family:'Liberation Sans',sans-serif;">Elliott</div>
<div class="t" style="left:239.00px;top:313.10px;font-size:9.4px;color:#222;font-family:'Liberation Sans',sans-serif;">Tamara</div>
<div class="t" style="left:239.00px;top:327.00px;font-size:9.4px;color:#222;font-family:'Liberation Sans',sans-serif;">Elliott</div>
<div class="t" style="left:29.20px;top:348.38px;font-size:9.4px;color:#222;font-family:'Liberation Sans',sans-serif;">Brooklynn</div>
<div class="t" style="left:128.80px;top:348.38px;font-size:9.4px;color:#222;font-family:'Liberation Sans',sans-serif;">Nichols</div>
<div class="t" style="left:239.00px;top:340.98px;font-size:9.4px;color:#222;font-family:'Liberation Sans',sans-serif;">Brooklynn</div>
<div class="t" style="left:239.00px;top:354.88px;font-size:9.4px;color:#222;font-family:'Liberation Sans',sans-serif;">Nichols</div>
<div class="t" style="left:29.20px;top:376.26px;font-size:9.4px;color:#222;font-family:'Liberation Sans',sans-serif;">Erick</div>
<div class="t" style="left:128.80px;top:376.26px;font-size:9.4px;color:#222;font-family:'Liberation Sans',sans-serif;">Werner</div>
<div class="t" style="left:239.00px;top:368.86px;font-size:9.4px;color:#222;font-family:'Liberation Sans',sans-serif;">Erick</div>
<div class="t" style="left:239.00px;top:382.76px;font-size:9.4px;color:#222;font-family:'Liberation Sans',sans-serif;">Werner</div>
<div class="t" style="left:29.20px;top:404.14px;font-size:9.4px;color:#222;font-family:'Liberation Sans',sans-serif;">Marley</div>
<div class="t" style="left:128.80px;top:404.14px;font-size:9.4px;color:#222;font-family:'Liberation Sans',sans-serif;">Russo</div>
<div class="t" style="left:239.00px;top:396.74px;font-size:9.4px;color:#222;font-family:'Liberation Sans',sans-serif;">Marley</div>
<div class="t" style="left:239.00px;top:410.64px;font-size:9.4px;color:#222;font-family:'Liberation Sans',sans-serif;">Russo</div>
<div class="t" style="left:29.20px;top:432.02px;font-size:9.4px;color:#222;font-family:'Liberation Sans',sans-serif;">Alisa</div>
<div class="t" style="left:128.80px;top:432.02px;font-size:9.4px;color:#222;font-family:'Liberation Sans',sans-serif;">Benitez</div>
<div class="t" style="left:239.00px;top:424.62px;font-size:9.4px;color:#222;font-family:'Liberation Sans',sans-serif;">Alisa</div>
<div class="t" style="left:239.00px;top:438.52px;font-size:9.4px;color:#222;font-family:'Liberation Sans',sans-serif;">Benitez</div>
<div class="t" style="left:29.20px;top:459.90px;font-size:9.4px;color:#222;font-family:'Liberation Sans',sans-serif;">Aliana</div>
<div class="t" style="left:128.80px;top:459.90px;font-size:9.4px;color:#222;font-family:'Liberation Sans',sans-serif;">Walter</div>
<div class="t" style="left:239.00px;top:452.50px;font-size:9.4px;color:#222;font-family:'Liberation Sans',sans-serif;">Aliana</div>
<div class="t" style="left:239.00px;top:466.40px;font-size:9.4px;color:#222;font-family:'Liberation Sans',sans-serif;">Walter</div>
<div class="t" style="left:29.20px;top:487.78px;font-size:9.4px;color:#222;font-family:'Liberation Sans',sans-serif;">Lorena</div>
<div class="t" style="left:128.80px;top:487.78px;font-size:9.4px;color:#222;font-family:'Liberation Sans',sans-serif;">Huerta</div>
<div class="t" style="left:239.00px;top:480.38px;font-size:9.4px;color:#222;font-family:'Liberation Sans',sans-serif;">Lorena</div>
<div class="t" style="left:239.00px;top:494.28px;font-size:9.4px;color:#222;font-family:'Liberation Sans',sans-serif;">Huerta</div>
<div class="t" style="left:29.20px;top:515.66px;font-size:9.4px;color:#222;font-family:'Liberation Sans',sans-serif;">Cristina</div>
<div class="t" style="left:128.80px;top:515.66px;font-size:9.4px;color:#222;font-family:'Liberation Sans',sans-serif;">Rodriguez</div>
<div class="t" style="left:239.00px;top:508.26px;font-size:9.4px;color:#222;font-family:'Liberation Sans',sans-serif;">Cristina</div>
<div class="t" style="left:239.00px;top:522.16px;font-size:9.4px;color:#222;font-family:'Liberation Sans',sans-serif;">Rodriguez</div>
<div class="a" style="left:235.60px;top:253.90px;width:92.50px;height:29.40px;border:1.6px solid #107c41"></div>
<div class="a" style="left:325.60px;top:280.80px;width:4.20px;height:4.20px;background:#107c41;border:1px solid #fff"></div>
<div class="a" style="left:236.30px;top:236.80px;width:91.10px;height:1.60px;background:#107c41"></div>
<div class="a" style="left:25.60px;top:254.60px;width:1.00px;height:27.88px;background:#107c41"></div>
<div class="a" style="left:343.00px;top:276.00px;width:254.60px;height:111.00px;background:#fff;border:1.3px solid #e05a48;border-radius:10px;box-shadow:1px 1px 0.8px rgba(0,0,0,.55)"></div>
<div class="t" style="left:355.00px;top:295.88px;font-size:16.2px;color:#111;font-family:'Liberation Mono',monospace;-webkit-text-stroke:0.25px #111;">don't forget to apply</div>
<div class="t" style="left:355.00px;top:323.58px;font-size:16.2px;color:#111;font-family:'Liberation Mono',monospace;-webkit-text-stroke:0.25px #111;">warp text after using</div>
<div class="t" style="left:355.00px;top:351.28px;font-size:16.2px;color:#111;font-family:'Liberation Mono',monospace;-webkit-text-stroke:0.25px #111;">the formula.</div>
<svg style="left:0px;top:0px" width="610" height="552" viewBox="0 0 610 552"><g transform="rotate(-6 494.7 91.9)">
<ellipse cx="494.7" cy="92.6" rx="24.2" ry="15.6" fill="none" stroke="rgba(60,0,0,0.35)" stroke-width="3.2"/>
<ellipse cx="494.7" cy="91.9" rx="24.0" ry="15.4" fill="none" stroke="#f50f0f" stroke-width="2.7"/>
</g></svg>
<div class="a" style="left:280.95px;top:179.70px;width:19.6px;height:19.6px;border-radius:50%;background:#e03c38;box-shadow:0 0 0 0.5px rgba(120,40,30,.6)"></div>
<div class="t" style="left:280.75px;width:20px;text-align:center;top:183.07px;font-size:13.5px;color:#fff">1</div>
<div class="a" style="left:311.20px;top:179.70px;width:19.6px;height:19.6px;border-radius:50%;background:#e03c38;box-shadow:0 0 0 0.5px rgba(120,40,30,.6)"></div>
<div class="t" style="left:311.00px;width:20px;text-align:center;top:183.07px;font-size:13.5px;color:#fff">2</div>
<div class="a" style="left:349.00px;top:179.10px;width:19.6px;height:19.6px;border-radius:50%;background:#e03c38;box-shadow:0 0 0 0.5px rgba(120,40,30,.6)"></div>
<div class="t" style="left:348.80px;width:20px;text-align:center;top:182.47px;font-size:13.5px;color:#fff">3</div>
<div class="a" style="left:511.90px;top:106.40px;width:19.6px;height:19.6px;border-radius:50%;background:#e03c38;box-shadow:0 0 0 0.5px rgba(120,40,30,.6)"></div>
<div class="t" style="left:511.70px;width:20px;text-align:center;top:109.77px;font-size:13.5px;color:#fff">4</div>
<div class="a" style="left:0.00px;top:0.00px;width:610.00px;height:4.00px;background:#000"></div>
<div class="a" style="left:0.00px;top:548.00px;width:610.00px;height:4.00px;background:#000"></div>
<div class="a" style="left:0.00px;top:0.00px;width:4.00px;height:552.00px;background:#000"></div>
<div class="a" style="left:606.00px;top:0.00px;width:4.00px;height:552.00px;background:#000"></div>
</body></html>
